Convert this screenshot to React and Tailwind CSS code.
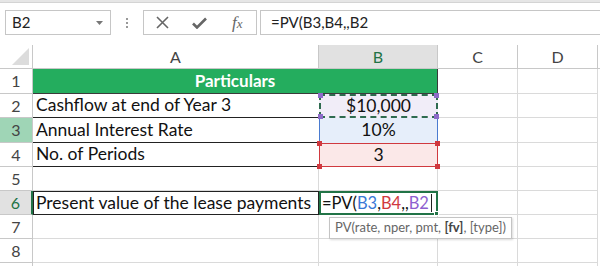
import React from 'react';

const cols = [
  { key: 'A', w: 'w-[286px]' },
  { key: 'B', w: 'w-[119px]' },
  { key: 'C', w: 'w-[80px]' },
  { key: 'D', w: 'w-[80px]' },
];

const grid = 'border-r border-b border-[#dadada]';

const RowHead = ({ n, className = '' }) => (
  <div className={`w-[33px] shrink-0 flex items-center justify-center text-[16px] text-[#444] border-r border-b border-[#c8c8c8] ${className}`}>
    {n}
  </div>
);

const Handle = ({ pos, color }) => (
  <div className={`absolute w-[5px] h-[5px] ${color} ${pos}`} />
);

const App = () => {
  return (
    <div className="w-[600px] h-[266px] bg-white overflow-hidden relative text-[#111]" style={{ fontFamily: "Lato, 'Open Sans', sans-serif" }}>
      {/* ribbon edge */}
      <div className="h-[3px] bg-[#e6e6e6] border-b border-[#d4d4d4]" />

      {/* formula bar */}
      <div className="h-[42px] pt-[7px] flex items-start">
        <div className="ml-[5px] w-[106px] h-[25px] border border-[#c6c6c6] flex items-center pl-[6px] text-[15px] text-[#222] relative">
          B2
          <svg className="absolute right-[7px] top-[10px]" width="7" height="4" viewBox="0 0 7 4">
            <path d="M0 0h7L3.5 4z" fill="#777" />
          </svg>
        </div>
        <div className="w-[32px] h-[25px] flex flex-col items-center justify-center gap-[2px]">
          <div className="w-[2px] h-[2px] bg-[#999]" />
          <div className="w-[2px] h-[2px] bg-[#999]" />
          <div className="w-[2px] h-[2px] bg-[#999]" />
        </div>
        <div className="w-[114px] h-[25px] border border-[#c6c6c6] flex items-center">
          <div className="w-[38px] flex justify-center">
            <svg width="13" height="13" viewBox="0 0 13 13">
              <path d="M1 1l11 11M12 1L1 12" stroke="#666" strokeWidth="1.6" />
            </svg>
          </div>
          <div className="w-[38px] flex justify-center">
            <svg width="15" height="12" viewBox="0 0 15 12">
              <path d="M1 6.5l4 4L14 1.5" stroke="#666" strokeWidth="2.6" fill="none" />
            </svg>
          </div>
          <div className="w-[38px] flex justify-center text-[#666] italic text-[17px]" style={{ fontFamily: "'Liberation Serif', serif" }}>
            f<span className="text-[13px] mt-[4px]">x</span>
          </div>
        </div>
        <div className="ml-[3px] flex-1 h-[25px] border border-r-0 border-[#c6c6c6] flex items-center pl-[10px] text-[15px] text-[#222]">
          =PV(B3,B4,,B2
        </div>
      </div>

      {/* column headers */}
      <div className="flex h-[24px]">
        <div className="w-[33px] shrink-0 border-r border-b border-[#c8c8c8] relative">
          <svg className="absolute right-[3px] bottom-[3px]" width="17" height="17" viewBox="0 0 17 17">
            <path d="M17 0v17H0z" fill="#dcdcdc" />
          </svg>
        </div>
        {cols.map((c) => (
          <div
            key={c.key}
            className={`${c.w} shrink-0 flex items-center justify-center text-[16px] border-r border-b border-[#c8c8c8] ${c.key === 'B' ? 'bg-[#e1e1e1] text-[#217346]' : 'text-[#444]'}`}
          >
            {c.key}
          </div>
        ))}
        <div className="flex-1 border-b border-[#c8c8c8]" />
      </div>

      {/* row 1 */}
      <div className="flex h-[25px]">
        <RowHead n="1" />
        <div className="w-[405px] shrink-0 bg-[#24ad5e] border-r border-b border-[#3a3a3a] flex items-center justify-center text-white font-bold text-[17px]">
          Particulars
        </div>
        <div className={`w-[80px] shrink-0 ${grid}`} />
        <div className={`w-[80px] shrink-0 ${grid}`} />
      </div>

      {/* row 2 */}
      <div className="flex h-[24px]">
        <RowHead n="2" />
        <div className="w-[286px] shrink-0 border-b border-[#222] flex items-center pl-[3px] text-[17.5px]">Cashflow at end of Year 3</div>
        <div className="w-[119px] shrink-0 relative bg-[#f1edf8] border-2 border-dashed border-[#2f6b4f] flex items-center justify-center text-[17.5px]">
          $10,000
          <Handle pos="-left-[3px] -top-[3px]" color="bg-[#8e6bc9]" />
          <Handle pos="-right-[3px] -top-[3px]" color="bg-[#8e6bc9]" />
          <Handle pos="-left-[3px] -bottom-[3px]" color="bg-[#8e6bc9]" />
          <Handle pos="-right-[3px] -bottom-[3px]" color="bg-[#8e6bc9]" />
        </div>
        <div className={`w-[80px] shrink-0 ${grid}`} />
        <div className={`w-[80px] shrink-0 ${grid}`} />
      </div>

      {/* row 3 */}
      <div className="flex h-[25px]">
        <RowHead n="3" className="bg-[#9fd5b6]" />
        <div className="w-[286px] shrink-0 border-b border-[#222] flex items-center pl-[3px] text-[17.5px]">Annual Interest Rate</div>
        <div className="w-[119px] shrink-0 bg-[#e6eefa] border-x border-[#4a7bd0] flex items-center justify-center text-[17.5px]">10%</div>
        <div className={`w-[80px] shrink-0 ${grid}`} />
        <div className={`w-[80px] shrink-0 ${grid}`} />
      </div>

      {/* row 4 */}
      <div className="flex h-[24px]">
        <RowHead n="4" />
        <div className="w-[286px] shrink-0 border-b border-[#222] flex items-center pl-[3px] text-[17.5px]">No. of Periods</div>
        <div className="w-[119px] shrink-0 relative bg-[#fbe8e8] border border-[#d0393f] flex items-center justify-center text-[17.5px]">
          3
          <Handle pos="-left-[3px] -top-[3px]" color="bg-[#d0393f]" />
          <Handle pos="-right-[3px] -top-[3px]" color="bg-[#d0393f]" />
          <Handle pos="-left-[3px] -bottom-[3px]" color="bg-[#d0393f]" />
          <Handle pos="-right-[3px] -bottom-[3px]" color="bg-[#d0393f]" />
        </div>
        <div className={`w-[80px] shrink-0 ${grid}`} />
        <div className={`w-[80px] shrink-0 ${grid}`} />
      </div>

      {/* row 5 */}
      <div className="flex h-[24px]">
        <RowHead n="5" />
        <div className={`w-[286px] shrink-0 ${grid}`} />
        <div className={`w-[119px] shrink-0 ${grid}`} />
        <div className={`w-[80px] shrink-0 ${grid}`} />
        <div className={`w-[80px] shrink-0 ${grid}`} />
      </div>

      {/* row 6 */}
      <div className="flex h-[24px]">
        <div className="w-[33px] shrink-0 flex items-center justify-center text-[16px] text-[#217346] bg-[#e1e1e1] border-r-2 border-b border-r-[#217346] border-b-[#c8c8c8]">6</div>
        <div className="w-[286px] shrink-0 border border-[#222] flex items-center pl-[2px] text-[17.5px] whitespace-nowrap">Present value of the lease payments</div>
        <div className="w-[119px] shrink-0 relative border-2 border-[#217346] flex items-center pl-[1px] text-[16.5px] whitespace-nowrap">
          =PV(<span className="text-[#3a78d6]">B3</span>,<span className="text-[#d0393f]">B4</span>,,<span className="text-[#8e5fcf]">B2</span>
          <span className="inline-block w-[1px] h-[18px] bg-[#222] ml-[2px]" />
          <div className="absolute -right-[3px] -bottom-[3px] w-[5px] h-[5px] bg-[#217346] border border-white" />
        </div>
        <div className={`w-[80px] shrink-0 ${grid}`} />
        <div className={`w-[80px] shrink-0 ${grid}`} />
      </div>

      {['7', '8', ''].map((n, i) => (
        <div key={i} className="flex h-[24px]">
          <RowHead n={n} />
          <div className={`w-[286px] shrink-0 ${grid}`} />
          <div className={`w-[119px] shrink-0 ${grid}`} />
          <div className={`w-[80px] shrink-0 ${grid}`} />
          <div className={`w-[80px] shrink-0 ${grid}`} />
        </div>
      ))}

      {/* function tooltip */}
      <div className="absolute left-[329px] top-[217px] h-[22px] px-[5px] bg-white border border-[#c4c4c4] shadow-[1px_1px_2px_rgba(0,0,0,0.15)] flex items-center text-[13px] text-[#666] whitespace-nowrap">
        PV(rate, nper, pmt,&nbsp;<span className="font-bold text-[#444]">[fv]</span>, [type])
      </div>
    </div>
  );
};

export default App;
